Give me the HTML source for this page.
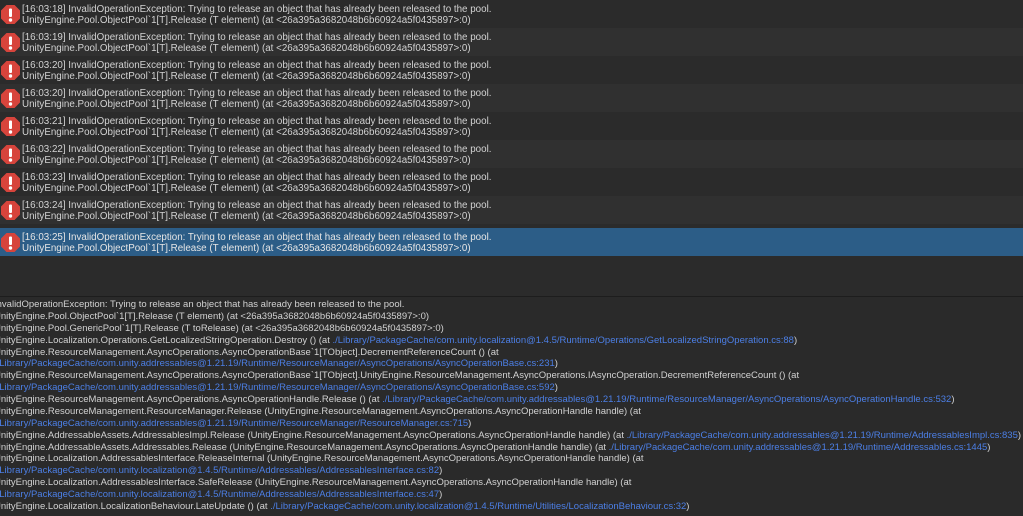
<!DOCTYPE html>
<html><head><meta charset="utf-8"><style>
*{margin:0;padding:0;box-sizing:border-box}
body{width:1023px;height:516px;overflow:hidden;background:#2b2b2b;font-family:"Liberation Sans",sans-serif;color:#d2d2d2;font-size:9.8px;position:relative}
.top{position:absolute;left:0;top:0;width:1023px;height:3px;background:#232323}
.top i{position:absolute;top:0;height:2px;background:#3a3a3a;width:70px}
.row{position:absolute;left:0;width:1023px;height:28px}
.row.a{background:#2b2b2b}.row.b{background:#303030}
.row.sel{background:#2c5d87;color:#e6e6e6}
.row svg{position:absolute;left:1px;top:5px}
.row .t{position:absolute;left:22px;top:4px;line-height:11px;white-space:nowrap}
.det{position:absolute;left:0;top:296px;width:1023px;height:220px;background:#2a2a2a;border-top:1px solid #1d1d1d;font-size:9.5px}
.det .l{position:absolute;left:-6px;white-space:nowrap;line-height:12px}
a{color:#4c7fe6;text-decoration:none}
</style></head><body>
<div class="top"><i style="left:160px"></i><i style="left:235px"></i><i style="left:310px"></i><i style="left:950px;width:73px"></i></div>
<div class="row a" style="top:0"><svg width="19" height="19" viewBox="0 0 19 19"><polygon points="5.5,0 13.5,0 19,5.5 19,13.5 13.5,19 5.5,19 0,13.5 0,5.5" fill="#d7443c"/><rect x="8" y="3.5" width="3" height="8.5" rx="1" fill="#fff"/><circle cx="9.5" cy="15" r="1.7" fill="#fff"/></svg><div class="t">[16:03:18] InvalidOperationException: Trying to release an object that has already been released to the pool.<br>UnityEngine.Pool.ObjectPool`1[T].Release (T element) (at &lt;26a395a3682048b6b60924a5f0435897&gt;:0)</div></div>
<div class="row b" style="top:28px"><svg width="19" height="19" viewBox="0 0 19 19"><polygon points="5.5,0 13.5,0 19,5.5 19,13.5 13.5,19 5.5,19 0,13.5 0,5.5" fill="#d7443c"/><rect x="8" y="3.5" width="3" height="8.5" rx="1" fill="#fff"/><circle cx="9.5" cy="15" r="1.7" fill="#fff"/></svg><div class="t">[16:03:19] InvalidOperationException: Trying to release an object that has already been released to the pool.<br>UnityEngine.Pool.ObjectPool`1[T].Release (T element) (at &lt;26a395a3682048b6b60924a5f0435897&gt;:0)</div></div>
<div class="row a" style="top:56px"><svg width="19" height="19" viewBox="0 0 19 19"><polygon points="5.5,0 13.5,0 19,5.5 19,13.5 13.5,19 5.5,19 0,13.5 0,5.5" fill="#d7443c"/><rect x="8" y="3.5" width="3" height="8.5" rx="1" fill="#fff"/><circle cx="9.5" cy="15" r="1.7" fill="#fff"/></svg><div class="t">[16:03:20] InvalidOperationException: Trying to release an object that has already been released to the pool.<br>UnityEngine.Pool.ObjectPool`1[T].Release (T element) (at &lt;26a395a3682048b6b60924a5f0435897&gt;:0)</div></div>
<div class="row b" style="top:84px"><svg width="19" height="19" viewBox="0 0 19 19"><polygon points="5.5,0 13.5,0 19,5.5 19,13.5 13.5,19 5.5,19 0,13.5 0,5.5" fill="#d7443c"/><rect x="8" y="3.5" width="3" height="8.5" rx="1" fill="#fff"/><circle cx="9.5" cy="15" r="1.7" fill="#fff"/></svg><div class="t">[16:03:20] InvalidOperationException: Trying to release an object that has already been released to the pool.<br>UnityEngine.Pool.ObjectPool`1[T].Release (T element) (at &lt;26a395a3682048b6b60924a5f0435897&gt;:0)</div></div>
<div class="row a" style="top:112px"><svg width="19" height="19" viewBox="0 0 19 19"><polygon points="5.5,0 13.5,0 19,5.5 19,13.5 13.5,19 5.5,19 0,13.5 0,5.5" fill="#d7443c"/><rect x="8" y="3.5" width="3" height="8.5" rx="1" fill="#fff"/><circle cx="9.5" cy="15" r="1.7" fill="#fff"/></svg><div class="t">[16:03:21] InvalidOperationException: Trying to release an object that has already been released to the pool.<br>UnityEngine.Pool.ObjectPool`1[T].Release (T element) (at &lt;26a395a3682048b6b60924a5f0435897&gt;:0)</div></div>
<div class="row b" style="top:140px"><svg width="19" height="19" viewBox="0 0 19 19"><polygon points="5.5,0 13.5,0 19,5.5 19,13.5 13.5,19 5.5,19 0,13.5 0,5.5" fill="#d7443c"/><rect x="8" y="3.5" width="3" height="8.5" rx="1" fill="#fff"/><circle cx="9.5" cy="15" r="1.7" fill="#fff"/></svg><div class="t">[16:03:22] InvalidOperationException: Trying to release an object that has already been released to the pool.<br>UnityEngine.Pool.ObjectPool`1[T].Release (T element) (at &lt;26a395a3682048b6b60924a5f0435897&gt;:0)</div></div>
<div class="row a" style="top:168px"><svg width="19" height="19" viewBox="0 0 19 19"><polygon points="5.5,0 13.5,0 19,5.5 19,13.5 13.5,19 5.5,19 0,13.5 0,5.5" fill="#d7443c"/><rect x="8" y="3.5" width="3" height="8.5" rx="1" fill="#fff"/><circle cx="9.5" cy="15" r="1.7" fill="#fff"/></svg><div class="t">[16:03:23] InvalidOperationException: Trying to release an object that has already been released to the pool.<br>UnityEngine.Pool.ObjectPool`1[T].Release (T element) (at &lt;26a395a3682048b6b60924a5f0435897&gt;:0)</div></div>
<div class="row b" style="top:196px"><svg width="19" height="19" viewBox="0 0 19 19"><polygon points="5.5,0 13.5,0 19,5.5 19,13.5 13.5,19 5.5,19 0,13.5 0,5.5" fill="#d7443c"/><rect x="8" y="3.5" width="3" height="8.5" rx="1" fill="#fff"/><circle cx="9.5" cy="15" r="1.7" fill="#fff"/></svg><div class="t">[16:03:24] InvalidOperationException: Trying to release an object that has already been released to the pool.<br>UnityEngine.Pool.ObjectPool`1[T].Release (T element) (at &lt;26a395a3682048b6b60924a5f0435897&gt;:0)</div></div>
<div class="row sel" style="top:228px"><svg width="19" height="19" viewBox="0 0 19 19"><polygon points="5.5,0 13.5,0 19,5.5 19,13.5 13.5,19 5.5,19 0,13.5 0,5.5" fill="#d7443c"/><rect x="8" y="3.5" width="3" height="8.5" rx="1" fill="#fff"/><circle cx="9.5" cy="15" r="1.7" fill="#fff"/></svg><div class="t">[16:03:25] InvalidOperationException: Trying to release an object that has already been released to the pool.<br>UnityEngine.Pool.ObjectPool`1[T].Release (T element) (at &lt;26a395a3682048b6b60924a5f0435897&gt;:0)</div></div>
<div class="det">
<div class="l" style="top:2px">InvalidOperationException: Trying to release an object that has already been released to the pool.</div>
<div class="l" style="top:13.9px">UnityEngine.Pool.ObjectPool`1[T].Release (T element) (at &lt;26a395a3682048b6b60924a5f0435897&gt;:0)</div>
<div class="l" style="top:25.8px">UnityEngine.Pool.GenericPool`1[T].Release (T toRelease) (at &lt;26a395a3682048b6b60924a5f0435897&gt;:0)</div>
<div class="l" style="top:37.6px">UnityEngine.Localization.Operations.GetLocalizedStringOperation.Destroy () (at <a>./Library/PackageCache/com.unity.localization@1.4.5/Runtime/Operations/GetLocalizedStringOperation.cs:88</a>)</div>
<div class="l" style="top:49.5px">UnityEngine.ResourceManagement.AsyncOperations.AsyncOperationBase`1[TObject].DecrementReferenceCount () (at</div>
<div class="l" style="top:61.4px"><a>./Library/PackageCache/com.unity.addressables@1.21.19/Runtime/ResourceManager/AsyncOperations/AsyncOperationBase.cs:231</a>)</div>
<div class="l" style="top:73.3px">UnityEngine.ResourceManagement.AsyncOperations.AsyncOperationBase`1[TObject].UnityEngine.ResourceManagement.AsyncOperations.IAsyncOperation.DecrementReferenceCount () (at</div>
<div class="l" style="top:85.2px"><a>./Library/PackageCache/com.unity.addressables@1.21.19/Runtime/ResourceManager/AsyncOperations/AsyncOperationBase.cs:592</a>)</div>
<div class="l" style="top:97px">UnityEngine.ResourceManagement.AsyncOperations.AsyncOperationHandle.Release () (at <a>./Library/PackageCache/com.unity.addressables@1.21.19/Runtime/ResourceManager/AsyncOperations/AsyncOperationHandle.cs:532</a>)</div>
<div class="l" style="top:108.9px">UnityEngine.ResourceManagement.ResourceManager.Release (UnityEngine.ResourceManagement.AsyncOperations.AsyncOperationHandle handle) (at</div>
<div class="l" style="top:120.8px"><a>./Library/PackageCache/com.unity.addressables@1.21.19/Runtime/ResourceManager/ResourceManager.cs:715</a>)</div>
<div class="l" style="top:132.7px">UnityEngine.AddressableAssets.AddressablesImpl.Release (UnityEngine.ResourceManagement.AsyncOperations.AsyncOperationHandle handle) (at <a>./Library/PackageCache/com.unity.addressables@1.21.19/Runtime/AddressablesImpl.cs:835</a>)</div>
<div class="l" style="top:144.6px">UnityEngine.AddressableAssets.Addressables.Release (UnityEngine.ResourceManagement.AsyncOperations.AsyncOperationHandle handle) (at <a>./Library/PackageCache/com.unity.addressables@1.21.19/Runtime/Addressables.cs:1445</a>)</div>
<div class="l" style="top:156.4px">UnityEngine.Localization.AddressablesInterface.ReleaseInternal (UnityEngine.ResourceManagement.AsyncOperations.AsyncOperationHandle handle) (at</div>
<div class="l" style="top:168.3px"><a>./Library/PackageCache/com.unity.localization@1.4.5/Runtime/Addressables/AddressablesInterface.cs:82</a>)</div>
<div class="l" style="top:180.2px">UnityEngine.Localization.AddressablesInterface.SafeRelease (UnityEngine.ResourceManagement.AsyncOperations.AsyncOperationHandle handle) (at</div>
<div class="l" style="top:192.1px"><a>./Library/PackageCache/com.unity.localization@1.4.5/Runtime/Addressables/AddressablesInterface.cs:47</a>)</div>
<div class="l" style="top:204px">UnityEngine.Localization.LocalizationBehaviour.LateUpdate () (at <a>./Library/PackageCache/com.unity.localization@1.4.5/Runtime/Utilities/LocalizationBehaviour.cs:32</a>)</div>
</div>
</body></html>
